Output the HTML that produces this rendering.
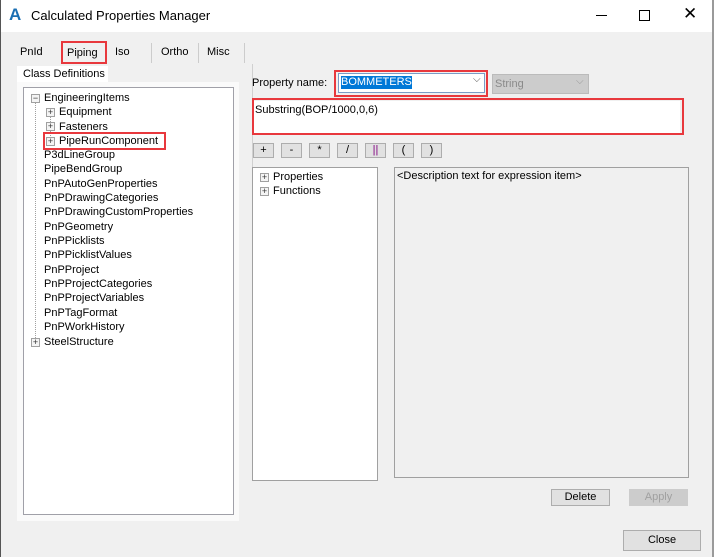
<!DOCTYPE html>
<html><head><style>
*{margin:0;padding:0;box-sizing:border-box}
body{width:714px;height:557px;background:#f0f0f0;font-family:"Liberation Sans",sans-serif;font-size:11px;color:#000;position:relative;overflow:hidden}
.a{position:absolute}
.t{position:absolute;white-space:nowrap}
.red{position:absolute;border:2px solid #e8383d}
.btn{position:absolute;background:#e1e1e1;border:1px solid #adadad;text-align:center;font-size:11px}
.pl{position:absolute;width:9px;height:9px;border:1px solid #a0a0a0;background:#f4f4f4;font-size:9px;line-height:7px;text-align:center;color:#333}
.dot{position:absolute;border-left:1px dotted #a0a0a0}
.doth{position:absolute;border-top:1px dotted #a0a0a0;width:6px}
</style></head><body>
<div class="a" style="left:0;top:0;width:714px;height:32px;background:#fff"></div>
<div class="a" style="left:0;top:0;width:1px;height:557px;background:#555"></div>
<div class="a" style="left:712px;top:0;width:2px;height:557px;background:#9a9a9a"></div>
<div class="t" style="left:9px;top:5px;font-size:17px;font-weight:bold;color:#1b6fb3">A</div>
<div class="t" style="left:31px;top:8px;font-size:13px">Calculated Properties Manager</div>
<div class="a" style="left:596px;top:15px;width:11px;height:1px;background:#000"></div>
<div class="a" style="left:639px;top:10px;width:11px;height:11px;border:1px solid #000"></div>
<div class="t" style="left:683px;top:4px;font-size:17px">✕</div>

<div class="t" style="left:20px;top:46px">PnId</div>
<div class="t" style="left:67px;top:47px">Piping</div>
<div class="red" style="left:61px;top:41px;width:46px;height:23px"></div>
<div class="t" style="left:115px;top:46px">Iso</div>
<div class="a" style="left:151px;top:43px;width:1px;height:20px;background:#ccc"></div>
<div class="t" style="left:161px;top:46px">Ortho</div>
<div class="a" style="left:198px;top:43px;width:1px;height:20px;background:#ccc"></div>
<div class="t" style="left:207px;top:46px">Misc</div>
<div class="a" style="left:244px;top:43px;width:1px;height:20px;background:#ccc"></div>

<div class="a" style="left:17px;top:66px;width:91px;height:17px;background:#fff"></div>
<div class="t" style="left:23px;top:68px">Class Definitions</div>
<div class="a" style="left:17px;top:82px;width:222px;height:439px;background:#fafafa"></div>
<div class="a" style="left:23px;top:87px;width:211px;height:428px;background:#fff;border:1px solid #a0a0a8"></div>

<div class="dot" style="left:35px;top:102px;height:240px"></div>
<div class="dot" style="left:50px;top:117px;height:25px"></div>
<div class="pl" style="left:31px;top:94px">−</div>
<div class="t" style="left:44px;top:92px">EngineeringItems</div>
<div class="pl" style="left:46px;top:108px">+</div><div class="t" style="left:59px;top:106px">Equipment</div>
<div class="pl" style="left:46px;top:122px">+</div><div class="t" style="left:59px;top:121px">Fasteners</div>
<div class="pl" style="left:46px;top:137px">+</div><div class="t" style="left:59px;top:135px">PipeRunComponent</div>
<div class="red" style="left:43px;top:132px;width:123px;height:18px"></div>
<div class="t" style="left:44px;top:149px">P3dLineGroup</div>
<div class="t" style="left:44px;top:163px">PipeBendGroup</div>
<div class="t" style="left:44px;top:178px">PnPAutoGenProperties</div>
<div class="t" style="left:44px;top:192px">PnPDrawingCategories</div>
<div class="t" style="left:44px;top:206px">PnPDrawingCustomProperties</div>
<div class="t" style="left:44px;top:221px">PnPGeometry</div>
<div class="t" style="left:44px;top:235px">PnPPicklists</div>
<div class="t" style="left:44px;top:249px">PnPPicklistValues</div>
<div class="t" style="left:44px;top:264px">PnPProject</div>
<div class="t" style="left:44px;top:278px">PnPProjectCategories</div>
<div class="t" style="left:44px;top:292px">PnPProjectVariables</div>
<div class="t" style="left:44px;top:307px">PnPTagFormat</div>
<div class="t" style="left:44px;top:321px">PnPWorkHistory</div>
<div class="pl" style="left:31px;top:338px">+</div><div class="t" style="left:44px;top:336px">SteelStructure</div>

<div class="a" style="left:252px;top:64px;width:1px;height:416px;background:#d0d0d0"></div>

<div class="t" style="left:252px;top:77px">Property name:</div>
<div class="a" style="left:338px;top:73px;width:147px;height:20px;background:#fff;border:1px solid #7a9cc6"></div>
<div class="a" style="left:341px;top:76px;width:71px;height:13px;background:#0078d7"></div>
<div class="t" style="left:341px;top:76px;color:#fff">BOMMETERS</div>
<div class="t" style="left:473px;top:74px;font-size:10px;color:#555">⌵</div>
<div class="red" style="left:334px;top:70px;width:154px;height:27px"></div>
<div class="a" style="left:492px;top:74px;width:97px;height:20px;background:#ccc;border:1px solid #bbb"></div>
<div class="t" style="left:495px;top:78px;color:#8a8a8a">String</div>
<div class="t" style="left:576px;top:76px;font-size:10px;color:#999">⌵</div>

<div class="a" style="left:252px;top:101px;width:428px;height:33px;background:#fff"></div>
<div class="t" style="left:255px;top:104px">Substring(BOP/1000,0,6)</div>
<div class="red" style="left:252px;top:98px;width:432px;height:37px"></div>

<div class="btn" style="left:253px;top:143px;width:21px;height:15px;line-height:13px">+</div>
<div class="btn" style="left:281px;top:143px;width:21px;height:15px;line-height:13px">-</div>
<div class="btn" style="left:309px;top:143px;width:21px;height:15px;line-height:13px">*</div>
<div class="btn" style="left:337px;top:143px;width:21px;height:15px;line-height:13px">/</div>
<div class="btn" style="left:365px;top:143px;width:21px;height:15px;line-height:13px;color:#800080">||</div>
<div class="btn" style="left:393px;top:143px;width:21px;height:15px;line-height:13px">(</div>
<div class="btn" style="left:421px;top:143px;width:21px;height:15px;line-height:13px">)</div>

<div class="a" style="left:252px;top:167px;width:126px;height:314px;background:#fff;border:1px solid #a0a0a0"></div>
<div class="pl" style="left:260px;top:173px">+</div><div class="t" style="left:273px;top:171px">Properties</div>
<div class="pl" style="left:260px;top:187px">+</div><div class="t" style="left:273px;top:185px">Functions</div>
<div class="a" style="left:394px;top:167px;width:295px;height:311px;background:#f0f0f0;border:1px solid #a0a0a0"></div>
<div class="t" style="left:397px;top:170px">&lt;Description text for expression item&gt;</div>

<div class="btn" style="left:551px;top:489px;width:59px;height:17px;line-height:15px">Delete</div>
<div class="btn" style="left:629px;top:489px;width:59px;height:17px;line-height:15px;background:#ccc;border-color:#ccc;color:#a0a0a0">Apply</div>
<div class="btn" style="left:623px;top:530px;width:78px;height:21px;line-height:19px">Close</div>
</body></html>
